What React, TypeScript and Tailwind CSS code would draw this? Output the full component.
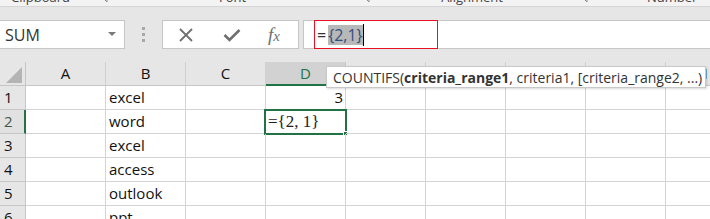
import React from 'react'

const COLS = ['A', 'B', 'C', 'D', 'E', 'F', 'G', 'H', 'I']

const ROWS: Record<number, { b?: string; d?: React.ReactNode; dRight?: boolean }> = {
  1: { b: 'excel', d: '3', dRight: true },
  2: { b: 'word' },
  3: { b: 'excel' },
  4: { b: 'access' },
  5: { b: 'outlook' },
  6: { b: 'ppt' },
}

function Launcher() {
  return (
    <svg width="10" height="10" viewBox="0 0 10 10" className="shrink-0">
      <path d="M1 1h7v7" fill="none" stroke="#8a8a8a" strokeWidth="1" />
      <path d="M4 4l4 4" stroke="#8a8a8a" strokeWidth="1" />
    </svg>
  )
}

function RibbonLabels() {
  return (
    <div className="h-[7px] bg-[#f3f3f3] border-b border-[#d5d5d5] overflow-hidden flex items-start text-[13px] text-[#444] leading-none">
      <div className="-mt-[9px] flex items-center">
        <span className="ml-[11px]">Clipboard</span>
        <span className="ml-[29px] mt-[2px]"><Launcher /></span>
        <span className="ml-[110px]">Font</span>
        <span className="ml-[115px] mt-[2px]"><Launcher /></span>
        <span className="ml-[70px]">Alignment</span>
        <span className="ml-[76px] mt-[2px]"><Launcher /></span>
        <span className="ml-[58px]">Number</span>
      </div>
    </div>
  )
}

function FormulaBar() {
  return (
    <div className="h-[29px] flex items-stretch">
      <div className="w-[125px] bg-white border border-l-0 border-[#c6c6c6] flex items-center justify-between pl-[5px] pr-[8px]">
        <span className="text-[16px] text-[#333]">SUM</span>
        <svg width="8" height="5" viewBox="0 0 8 5">
          <path d="M0 0h8L4 4z" fill="#7a7a7a" />
        </svg>
      </div>
      <div className="w-[37px] flex flex-col items-center justify-center gap-[3px]">
        <span className="w-[3px] h-[3px] bg-[#a8a8a8]" />
        <span className="w-[3px] h-[3px] bg-[#a8a8a8]" />
        <span className="w-[3px] h-[3px] bg-[#a8a8a8]" />
      </div>
      <div className="w-[137px] bg-white border border-[#c6c6c6] flex items-center">
        <svg width="16" height="16" viewBox="0 0 16 16" className="ml-[15px]">
          <path d="M2 2l12 12M14 2L2 14" stroke="#6f6f6f" strokeWidth="1.8" />
        </svg>
        <svg width="18" height="14" viewBox="0 0 18 14" className="ml-[29px]">
          <path d="M1.5 7l5 5L16.5 2" fill="none" stroke="#6f6f6f" strokeWidth="2.6" />
        </svg>
        <span className="ml-[27px] text-[19px] italic text-[#6f6f6f] leading-none" style={{ fontFamily: '"Liberation Serif", serif' }}>
          f<span className="text-[15px]">x</span>
        </span>
      </div>
      <div className="w-[4px]" />
      <div className="flex-1 bg-white border border-r-0 border-[#c6c6c6] flex items-stretch pl-[10px]">
        <div className="w-[124px] border border-[#e81123] flex items-center pl-[2px] -mt-px -mb-px">
          <span className="text-[16px] text-[#333]">=</span>
          <span className="text-[16px] text-[#2f4f7f] bg-[#b8b8b8] leading-[20px] ml-[2px]">{'{2,1}'}</span>
          <span className="w-px h-[22px] bg-black" />
        </div>
      </div>
    </div>
  )
}

function Grid() {
  return (
    <div className="relative text-[15px] text-[#111] bg-white">
      <div className="flex h-[24px] bg-[#e6e6e6] border-b border-[#c6c6c6]">
        <div className="w-[26px] shrink-0 border-r border-[#c6c6c6] relative">
          <svg width="16" height="16" viewBox="0 0 16 16" className="absolute left-[6px] top-[5px]">
            <path d="M16 0V16H0z" fill="#b4b4b4" />
          </svg>
        </div>
        {COLS.map((c) => (
          <div
            key={c}
            className={
              c === 'D'
                ? 'w-[80px] shrink-0 flex items-center justify-center border-r border-[#c6c6c6] bg-[#d2d2d2] text-[#217346] border-b-2 border-b-[#217346] -mb-px'
                : 'w-[80px] shrink-0 flex items-center justify-center border-r border-[#d0d0d0]'
            }
          >
            {c}
          </div>
        ))}
      </div>
      {[1, 2, 3, 4, 5, 6].map((r) => (
        <div key={r} className="flex h-[24px]">
          <div
            className={
              r === 2
                ? 'w-[26px] shrink-0 bg-[#e1e1e1] border-b border-[#c6c6c6] border-r-2 border-r-[#217346] pl-[4px] flex items-center text-[#3d5a48]'
                : 'w-[26px] shrink-0 bg-[#e6e6e6] border-b border-r border-[#c6c6c6] pl-[4px] flex items-center'
            }
          >
            {r}
          </div>
          {COLS.map((c) => (
            <div
              key={c}
              className={
                'w-[80px] shrink-0 border-r border-b border-[#d4d4d4] flex items-center relative ' +
                (c === 'D' && ROWS[r].dRight ? 'justify-end pr-[2px]' : 'pl-[3px]')
              }
            >
              {c === 'B' && ROWS[r].b}
              {c === 'D' && ROWS[r].d}
              {c === 'D' && r === 2 && (
                <>
                  <span className="text-[17px] text-[#222] -ml-px" style={{ fontFamily: '"Liberation Serif", serif' }}>
                    ={'{'}2, 1{'}'}
                  </span>
                  <div className="absolute -left-[2px] -top-[1px] w-[83px] h-[26px] border-2 border-[#217346]" />
                  <div className="absolute right-[-3px] bottom-[-3px] w-[5px] h-[5px] bg-[#217346] border border-white" />
                </>
              )}
            </div>
          ))}
        </div>
      ))}
      <div className="absolute left-[326px] top-[4px] h-[22px] w-[380px] bg-white border border-[#c8c8c8] shadow-[1px_1px_2px_rgba(0,0,0,0.15)] flex items-center pl-[6px] text-[14px] text-[#333] whitespace-nowrap">
        COUNTIFS(<span className="font-bold">criteria_range1</span>, criteria1, [criteria_range2, ...)
      </div>
    </div>
  )
}

export default function App() {
  return (
    <div className="w-[710px] h-[219px] overflow-hidden bg-[#e6e6e6]" style={{ fontFamily: '"Open Sans", "Noto Sans", sans-serif' }}>
      <RibbonLabels />
      <div className="h-[13px]" />
      <FormulaBar />
      <div className="h-[13px]" />
      <Grid />
    </div>
  )
}
